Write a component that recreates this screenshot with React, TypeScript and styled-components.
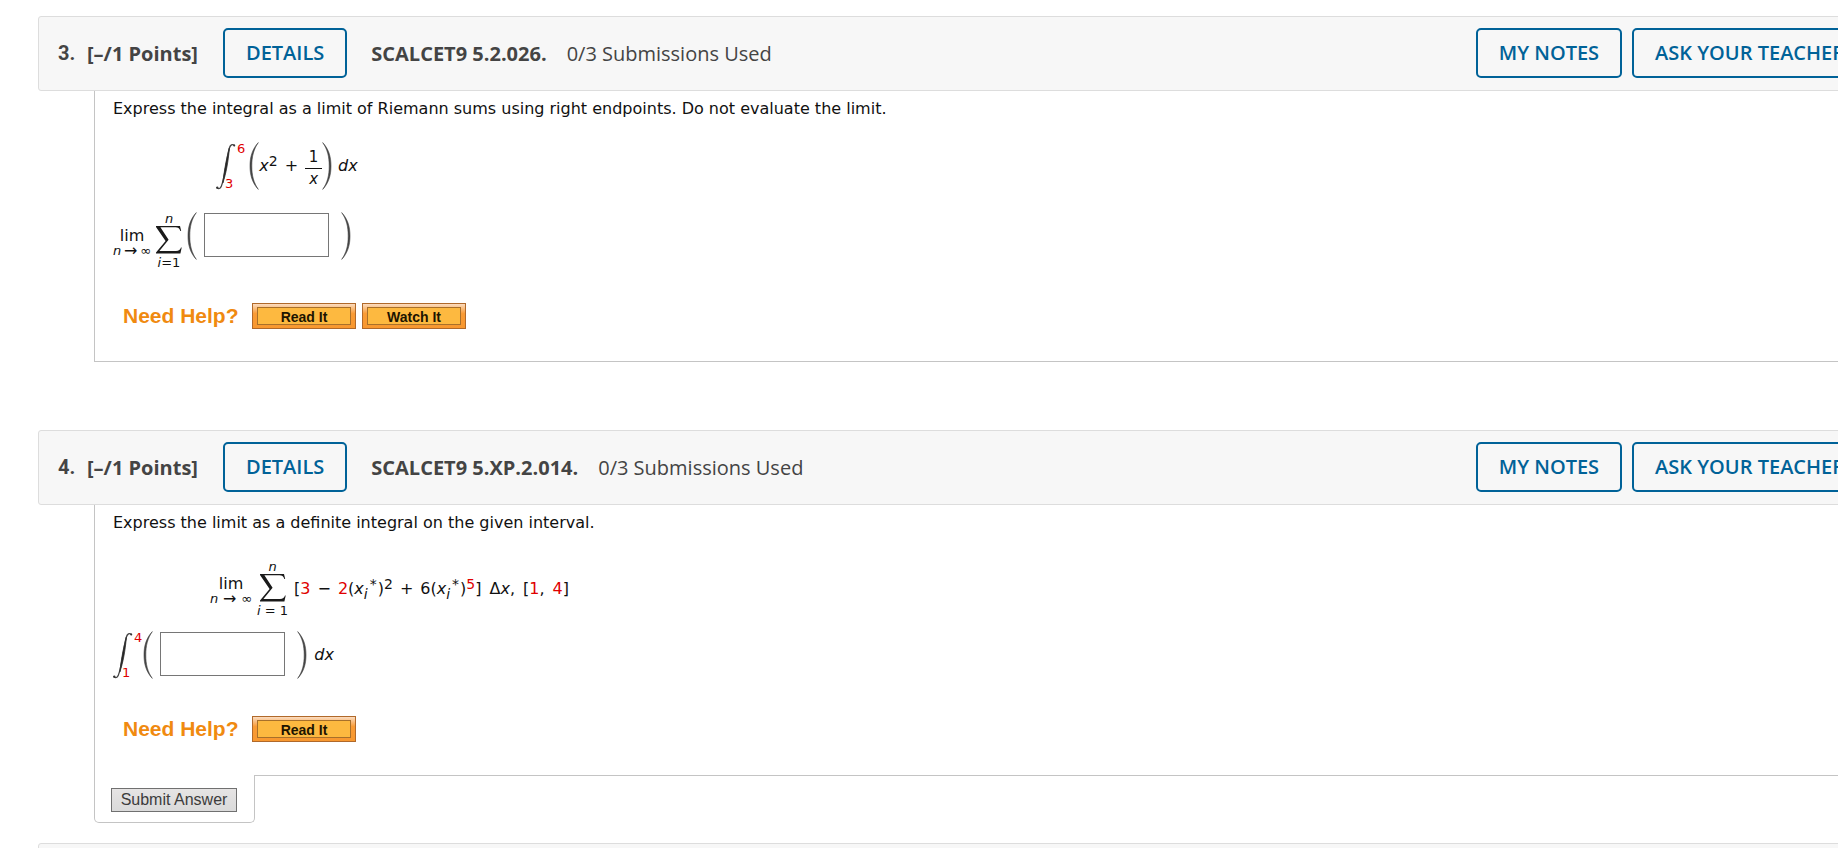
import React from "react";
import styled, { createGlobalStyle } from "styled-components";

const GlobalStyle = createGlobalStyle`
  *, *::before, *::after { box-sizing: border-box; }
  body { margin: 0; background: #fff; color: #111; font-family: "DejaVu Sans", sans-serif; }
`;

const Page = styled.main`
  height: 100vh;
  overflow: hidden;
  padding: 16px 0 0 38px;
`;

/* The assignment is wider than the window and runs off its right side. */
const Assignment = styled.div`
  margin-right: -45px;
`;

const Question = styled.section<{ $after: number }>`
  margin-bottom: ${(p) => p.$after}px;
`;

const Header = styled.header`
  display: flex;
  align-items: center;
  min-height: 75px;
  padding: 0 14px 1px 19px;
  background: #f7f7f7;
  border: 1px solid #ddd;
  border-radius: 3px;
  color: #444;
  font: 400 20px/28px "Open Sans", sans-serif;
  white-space: nowrap;
`;

const Number = styled.span`
  width: 29px;
  font: 700 20px/28px Roboto, sans-serif;
`;

const Points = styled.strong`
  width: 136px;
  padding-top: 2px;
`;

const Code = styled.strong`
  margin: 0 20px 0 24px;
  padding-top: 2px;
`;

const Submissions = styled.span`
  padding-top: 2px;
`;

const Actions = styled.div`
  display: flex;
  gap: 10px;
  margin-left: auto;
`;

const OutlineButton = styled.button`
  height: 50px;
  padding: 0 21px;
  background: transparent;
  border: 2px solid #006298;
  border-radius: 5px;
  color: #006298;
  font: 600 20px/28px "Open Sans", sans-serif;
  white-space: nowrap;
`;

const Panel = styled.div<{ $closed?: boolean }>`
  margin-left: 56px;
  padding: 8px 18px ${(p) => (p.$closed ? 32 : 33)}px;
  border-left: 1px solid #c4c4c4;
  border-bottom: ${(p) => (p.$closed ? "1px solid #c4c4c4" : "0")};
`;

const Prompt = styled.p`
  margin: 0;
  font-size: 16px;
  line-height: 20px;
`;

const MathRow = styled.div<{ $above: number; $indent?: number; $height: number }>`
  display: flex;
  align-items: flex-start;
  height: ${(p) => p.$height}px;
  margin-top: ${(p) => p.$above}px;
  padding-left: ${(p) => p.$indent ?? 0}px;
  font-size: 16px;
  line-height: 20px;
  white-space: nowrap;
`;

const Term = styled.span<{ $top: number; $left?: number }>`
  margin: ${(p) => p.$top}px 0 0 ${(p) => p.$left ?? 0}px;
`;

const Red = styled.span`
  color: #e00000;
`;

const Operator = styled.span`
  margin: 0 7px;
`;

const Gap = styled.span`
  margin-left: 8px;
`;

const Sup = styled.sup`
  font-size: 14px;
  line-height: 0;
  vertical-align: 5px;
`;

const Sub = styled.sub`
  font-size: 14px;
  font-style: italic;
  line-height: 0;
  vertical-align: -5px;
`;

const Star = styled(Sup)`
  margin: 0 1px 0 2px;
`;

const Bounds = styled.span`
  display: flex;
  flex-direction: column;
  justify-content: space-between;
  height: 48px;
  margin-left: -11px;
  color: #e00000;
  font-size: 13px;
  line-height: 13px;
`;

const UpperBound = styled.span`
  padding-left: 12px;
`;

const Fraction = styled.span`
  display: flex;
  flex-direction: column;
  width: 17px;
  margin-top: 5px;
  font-size: 15px;
  text-align: center;
`;

const Numerator = styled.span`
  padding-bottom: 1px;
  border-bottom: 1px solid #111;
`;

const Stack = styled.span`
  display: flex;
  flex-direction: column;
  align-items: center;
  font-size: 13px;
  line-height: 14px;
`;

const Limit = styled(Stack)`
  padding-top: 15px;
`;

const LimitWord = styled.span`
  font-size: 16px;
  line-height: 17px;
`;

const Approach = styled.span<{ $width: number }>`
  display: flex;
  justify-content: space-between;
  width: ${(p) => p.$width}px;
`;

const Arrow = styled.span`
  font-size: 16px;
`;

const StackBase = styled.span`
  line-height: 18px;
`;

const Answer = styled.input`
  width: 125px;
  height: 44px;
  margin: 1px 12px 0 7px;
  padding: 0 8px;
  background: #fff;
  border: 1px solid #767676;
  font: 16px "DejaVu Sans", sans-serif;
`;

const Help = styled.div<{ $above: number }>`
  display: flex;
  align-items: center;
  gap: 6px;
  height: 26px;
  margin-top: ${(p) => p.$above}px;
  padding-left: 10px;
`;

const HelpTitle = styled.strong`
  width: 123px;
  color: #f08a10;
  font: 700 21px/26px "Liberation Sans", sans-serif;
`;

const HelpButton = styled.button`
  width: 104px;
  height: 26px;
  padding: 3px 4px;
  background: linear-gradient(#fbdcc0, #f99b35 40%, #f8982f);
  border: 1px solid #b0692a;
`;

const HelpFace = styled.span`
  display: block;
  height: 18px;
  background: #fdb940;
  border: 1px solid #a8702a;
  color: #1c1400;
  font: 700 14px/18px "Liberation Sans", sans-serif;
`;

const Footer = styled.div`
  display: flex;
  margin-left: 56px;
`;

const SubmitTab = styled.div`
  padding: 13px 17px 10px 16px;
  border: 1px solid #c4c4c4;
  border-top: 0;
  border-radius: 0 0 5px 5px;
`;

const FooterLine = styled.div`
  flex: 1;
  border-top: 1px solid #c4c4c4;
`;

const SubmitButton = styled.button`
  width: 126px;
  height: 24px;
  padding: 0;
  background: linear-gradient(#e6e4e4, #dadada);
  border: 1px solid #707070;
  color: #3c3c3c;
  font: 16px/22px "Liberation Sans", sans-serif;
  white-space: nowrap;
`;

const Glyph = styled.svg<{ $left?: number }>`
  display: block;
  flex: none;
  margin-left: ${(p) => p.$left ?? 0}px;
`;

const Integral = () => (
  <Glyph width="20" height="48" viewBox="0 0 20 48" aria-label="integral">
    <path
      d="M18.4 3.4C16.4 1.8 14.2 2.6 13.2 6.7C11.6 13.7 10.2 22 8.8 30C7.2 39 6 44.6 4.2 46C3 46.8 1.6 46.4 .8 45.8"
      fill="none" stroke="#444" strokeWidth="1.4" strokeLinecap="round"
    />
    <path d="M13.4 6C11 14 8.6 26 6.8 41C10 32 12.2 20 13.4 6Z" fill="#222" stroke="#333" strokeWidth=".8" />
    <circle cx="18.2" cy="3.5" r="1" fill="#333" />
    <circle cx="1.3" cy="45.7" r="1.1" fill="#333" />
  </Glyph>
);

const Sigma = () => (
  <Glyph width="28" height="28" viewBox="0 0 28 28" aria-label="sum">
    <path
      d="M1 0H25L26.2 5H25.4C24.4 2.2 23 1.2 20.5 1.2H5.4L13.6 13.8L4.4 25H21C24 25 25.2 23.6 26 21.5H26.7L25.4 27.6H1V26.6L10.6 15L1 1Z"
      fill="#1a1a1a"
    />
  </Glyph>
);

const Paren = ({ side, left }: { side: "open" | "close"; left?: number }) => (
  <Glyph width="10" height="48" viewBox="0 0 10 48" $left={left} aria-label={side + " parenthesis"}>
    <path
      d={
        side === "open"
          ? "M9.3 .6C3.4 7 1 14.5 1 24C1 33.5 3.4 41 9.3 47.4C4.6 40.6 2.8 33.5 2.8 24C2.8 14.5 4.6 7.4 9.3 .6Z"
          : "M.7 .6C6.6 7 9 14.5 9 24C9 33.5 6.6 41 .7 47.4C5.4 40.6 7.2 33.5 7.2 24C7.2 14.5 5.4 7.4 .7 .6Z"
      }
      fill="#444" stroke="#444" strokeWidth=".6"
    />
  </Glyph>
);

const QuestionHeader = ({ number, code }: { number: number; code: string }) => (
  <Header>
    <Number>{number}.</Number>
    <Points>[–/1 Points]</Points>
    <OutlineButton>DETAILS</OutlineButton>
    <Code>{code}</Code>
    <Submissions>0/3 Submissions Used</Submissions>
    <Actions>
      <OutlineButton>MY NOTES</OutlineButton>
      <OutlineButton>ASK YOUR TEACHER</OutlineButton>
    </Actions>
  </Header>
);

const NeedHelp = ({ items, above }: { items: string[]; above: number }) => (
  <Help $above={above}>
    <HelpTitle>Need Help?</HelpTitle>
    {items.map((item) => (
      <HelpButton key={item}>
        <HelpFace>{item}</HelpFace>
      </HelpButton>
    ))}
  </Help>
);

const LimitToInfinity = ({ width }: { width: number }) => (
  <Limit>
    <LimitWord>lim</LimitWord>
    <Approach $width={width}>
      <i>n</i>
      <Arrow>→</Arrow>
      <span>∞</span>
    </Approach>
  </Limit>
);

const XStar = () => (
  <>
    (<i>x</i>
    <Sub>i</Sub>
    <Star>*</Star>)
  </>
);

export default function App() {
  return (
    <>
      <GlobalStyle />
      <Page>
        <Assignment>
          <Question $after={68}>
            <QuestionHeader number={3} code="SCALCET9 5.2.026." />
            <Panel $closed>
              <Prompt>
                Express the integral as a limit of Riemann sums using right endpoints. Do not evaluate the limit.
              </Prompt>
              <MathRow $above={23} $indent={103} $height={48}>
                <Integral />
                <Bounds>
                  <UpperBound>6</UpperBound>
                  <span>3</span>
                </Bounds>
                <Paren side="open" left={4} />
                <Term $top={14}>
                  <i>x</i>
                  <Sup>2</Sup>
                  <Operator>+</Operator>
                </Term>
                <Fraction>
                  <Numerator>1</Numerator>
                  <i>x</i>
                </Fraction>
                <Paren side="close" />
                <Term $top={14} $left={6}>
                  <i>dx</i>
                </Term>
              </MathRow>
              <MathRow $above={22} $height={60}>
                <LimitToInfinity width={38} />
                <Term $top={0} $left={4}>
                  <Stack>
                    <i>n</i>
                    <Sigma />
                    <StackBase>
                      <i>i</i>=1
                    </StackBase>
                  </Stack>
                </Term>
                <Paren side="open" left={4} />
                <Answer aria-label="Summand" />
                <Paren side="close" />
              </MathRow>
              <NeedHelp above={31} items={["Read It", "Watch It"]} />
            </Panel>
          </Question>

          <Question $after={20}>
            <QuestionHeader number={4} code="SCALCET9 5.XP.2.014." />
            <Panel>
              <Prompt>Express the limit as a definite integral on the given interval.</Prompt>
              <MathRow $above={27} $indent={97} $height={60}>
                <LimitToInfinity width={42} />
                <Term $top={0} $left={5}>
                  <Stack>
                    <i>n</i>
                    <Sigma />
                    <StackBase>
                      <i>i</i> = 1
                    </StackBase>
                  </Stack>
                </Term>
                <Term $top={19} $left={6}>
                  [<Red>3</Red>
                  <Operator>−</Operator>
                  <Red>2</Red>
                  <XStar />
                  <Sup>2</Sup>
                  <Operator>+</Operator>6<XStar />
                  <Sup>
                    <Red>5</Red>
                  </Sup>
                  ]<Gap>Δ</Gap>
                  <i>x</i>,<Gap>[</Gap>
                  <Red>1</Red>,
                  <Gap>
                    <Red>4</Red>
                  </Gap>
                  ]
                </Term>
              </MathRow>
              <MathRow $above={11} $height={49}>
                <Integral />
                <Bounds>
                  <UpperBound>4</UpperBound>
                  <span>1</span>
                </Bounds>
                <Paren side="open" left={1} />
                <Answer aria-label="Integrand" />
                <Paren side="close" />
                <Term $top={14} $left={7}>
                  <i>dx</i>
                </Term>
              </MathRow>
              <NeedHelp above={36} items={["Read It"]} />
            </Panel>
            <Footer>
              <SubmitTab>
                <SubmitButton type="submit">Submit Answer</SubmitButton>
              </SubmitTab>
              <FooterLine />
            </Footer>
          </Question>

          <Header />
        </Assignment>
      </Page>
    </>
  );
}
